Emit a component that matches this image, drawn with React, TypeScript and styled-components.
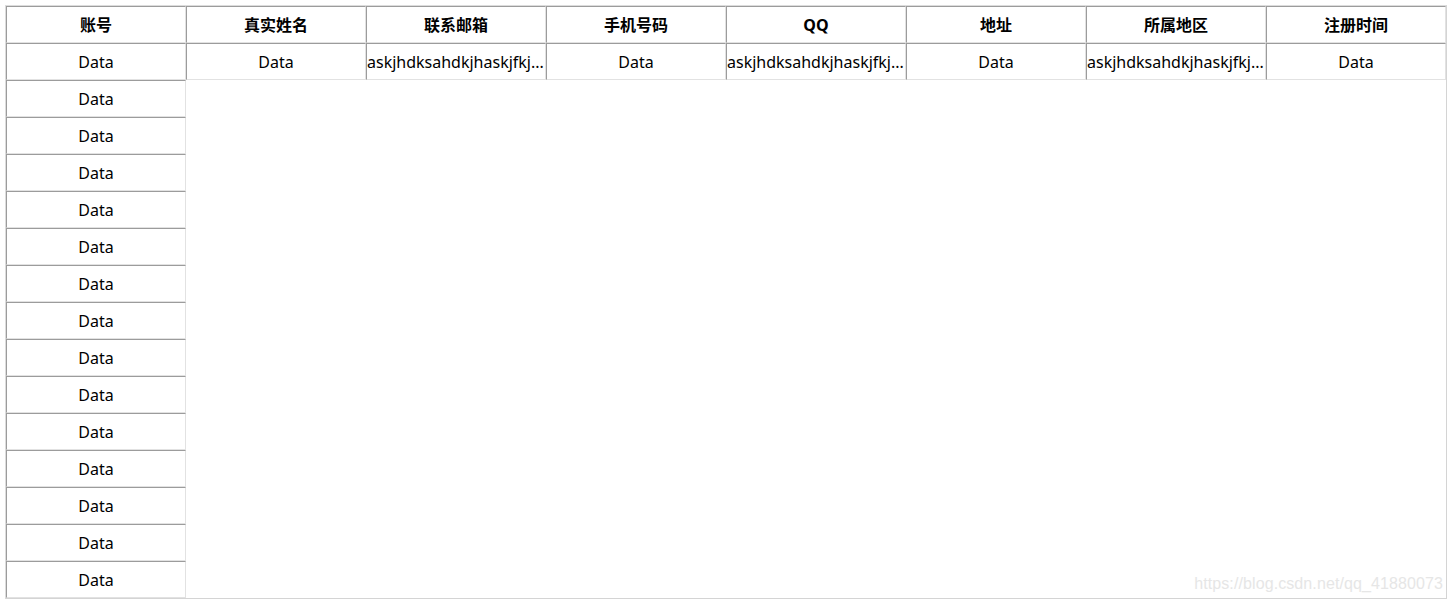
import React from "react";
import styled, { createGlobalStyle } from "styled-components";

const Global = createGlobalStyle`
  html, body { margin: 0; padding: 0; background: #ffffff; }
  body { padding: 5px; font-family: "Noto Sans", "Noto Sans CJK SC", sans-serif; }
`;

const Page = styled.div`
  position: relative;
  width: 1442px;
`;

const Grid = styled.div`
  display: grid;
  grid-template-columns: repeat(8, 180px);
  grid-auto-rows: 37px;
  border: 1px solid #dcdcdc;
  border-right-color: #d4d4d4;
  border-bottom-color: #d4d4d4;
  width: 1440px;
  background: #ffffff;
`;

const Cell = styled.div<{ $head?: boolean; $col?: number; $left?: boolean }>`
  box-sizing: border-box;
  border-style: solid;
  border-width: 1px;
  border-color: #9c9c9c #e2e2e2 #e2e2e2 #9c9c9c;
  grid-column: ${(p) => (p.$col ? `${p.$col} / span 1` : "auto")};
  display: block;
  text-align: ${(p) => (p.$left ? "left" : "center")};
  padding-top: 2px;
  line-height: 33px;
  font-size: 16px;
  color: #000;
  font-weight: ${(p) => (p.$head ? 700 : 400)};
  white-space: nowrap;
  overflow: hidden;
  text-overflow: ellipsis;
`;

const Watermark = styled.div`
  position: absolute;
  right: 4px;
  bottom: 6px;
  font-family: "Liberation Sans", Arial, sans-serif;
  font-size: 16px;
  color: #e6e6e6;
  letter-spacing: 0.1px;
`;

const headers = ["账号", "真实姓名", "联系邮箱", "手机号码", "QQ", "地址", "所属地区", "注册时间"];
const long = "askjhdksahdkjhaskjfkj...";
const firstRow = ["Data", "Data", long, "Data", long, "Data", long, "Data"];

export default function App() {
  return (
    <>
      <Global />
      <Page>
        <Grid>
          {headers.map((h) => (
            <Cell key={h} $head>
              {h}
            </Cell>
          ))}
          {firstRow.map((d, i) => (
            <Cell key={"r" + i} $left={d === long}>
              {d}
            </Cell>
          ))}
          {Array.from({ length: 14 }).map((_, i) => (
            <Cell key={"c" + i} $col={1}>
              Data
            </Cell>
          ))}
        </Grid>
        <Watermark>https://blog.csdn.net/qq_41880073</Watermark>
      </Page>
    </>
  );
}
